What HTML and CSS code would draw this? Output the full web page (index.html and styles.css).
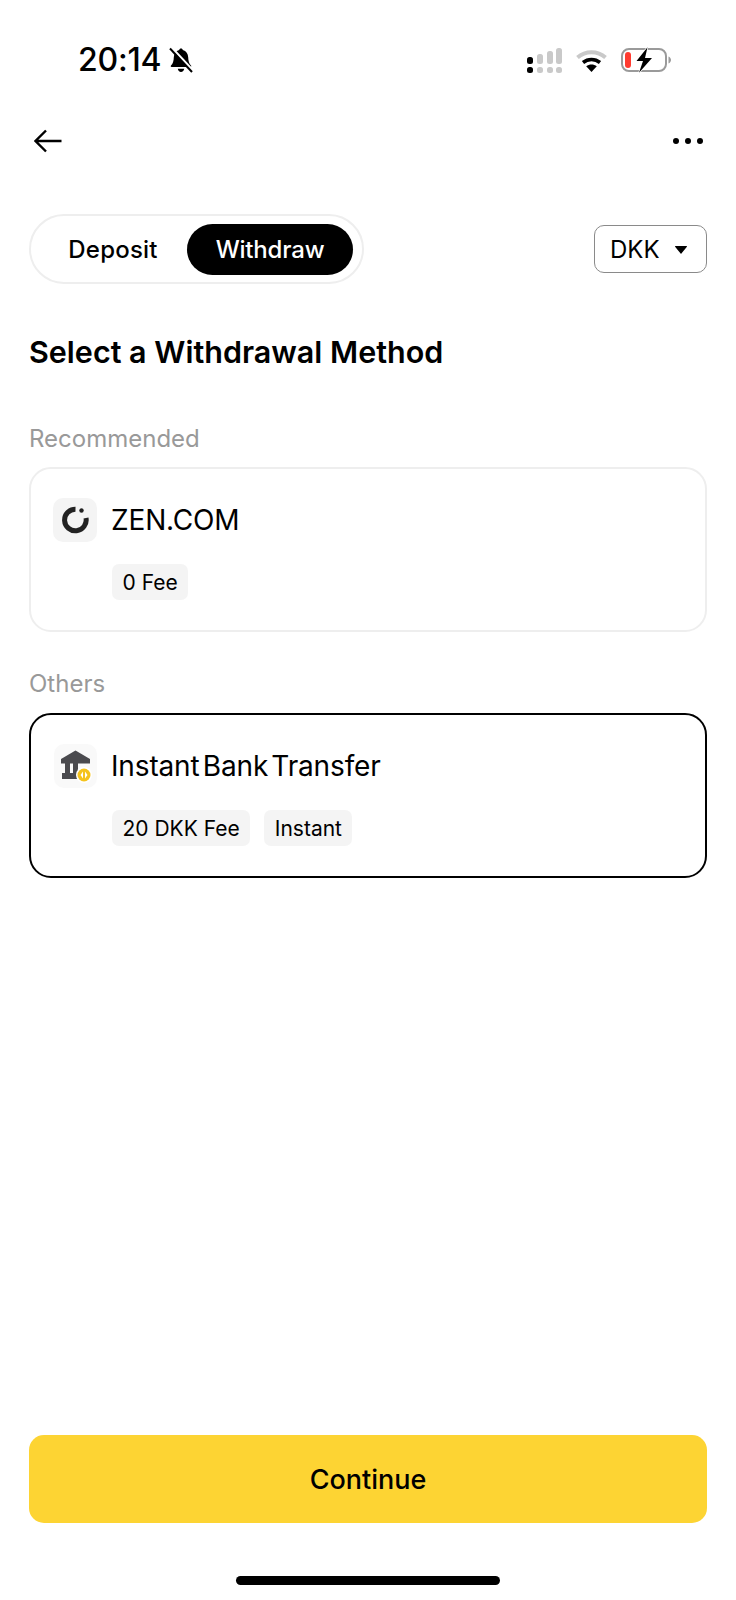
FILE: index.html
```html
<!DOCTYPE html>
<html lang="en">
<head>
<meta charset="utf-8">
<title>Select a Withdrawal Method</title>
<link rel="stylesheet" href="styles.css">
</head>
<body>
<div class="page">
  <div class="status">
    <div class="status-left">
      <span class="time">20:14</span>
      <svg class="bell" viewBox="0 0 24 26" width="24" height="26">
        <path d="M12 1.500c1 0 1.700.7 1.800 1.600 3.500.9 5.200 3.800 5.400 7.200.1 3.600.8 6.300 2.800 8.200.6.700.2 1.500-.6 1.500H2.600c-.8 0-1.200-.8-.6-1.500 2-1.900 2.700-4.600 2.800-8.200.2-3.400 1.900-6.300 5.400-7.200.1-.9.800-1.600 1.800-1.600z" fill="#000"/>
        <path d="M8.800 21.800h6.400c-.2 1.900-1.500 3.200-3.200 3.200s-3-1.300-3.200-3.200z" fill="#000"/>
        <path d="M2.500 0.500 24 23.500" stroke="#fff" stroke-width="2.500"/>
        <path d="M1 1.500 23 25" stroke="#000" stroke-width="2"/>
      </svg>
    </div>
    <div class="status-right">
      <svg class="signal" viewBox="0 0 35 25" width="35" height="25">
        <rect x="0" y="9" width="6" height="7" rx="2.500" fill="#000"/>
        <rect x="0" y="19" width="6" height="6" rx="2.500" fill="#000"/>
        <rect x="10" y="6" width="6" height="10" rx="2.500" fill="#c9c9c9"/>
        <rect x="10" y="19" width="6" height="6" rx="2.500" fill="#c9c9c9"/>
        <rect x="20" y="3" width="6" height="13" rx="2.500" fill="#c9c9c9"/>
        <rect x="20" y="19" width="6" height="6" rx="2.500" fill="#c9c9c9"/>
        <rect x="29" y="0" width="6" height="16" rx="2.500" fill="#c9c9c9"/>
        <rect x="29" y="19" width="6" height="6" rx="2.500" fill="#c9c9c9"/>
      </svg>
      <svg class="wifi" viewBox="0 0 31 23" width="31" height="23">
        <path d="M1.500 8.500C9.500 1.500 21.500 1.500 29.500 8.500" fill="none" stroke="#c9c9c9" stroke-width="4"/>
        <path d="M7 13.500C12 9.500 19 9.500 24 13.500" fill="none" stroke="#000" stroke-width="3.600"/>
        <path d="M15.500 23 10.200 17.300C13.300 15 17.700 15 20.800 17.300z" fill="#000"/>
      </svg>
      <svg class="battery" viewBox="0 0 50 26" width="50" height="26">
        <rect x="1" y="2" width="44" height="22" rx="7" fill="none" stroke="#9a9a9a" stroke-width="2"/>
        <path d="M47.500 9.500c1.500.6 2.500 2 2.500 3.500s-1 2.900-2.500 3.500z" fill="#9a9a9a"/>
        <rect x="4" y="5" width="6" height="16" rx="3" fill="#ff3b30"/>
        <path d="M26.500 0.300 15.500 14H22L18 25.700 31 11H24z" fill="#000" stroke="#fff" stroke-width="1.500" paint-order="stroke"/>
      </svg>
    </div>
  </div>

  <div class="nav">
    <svg class="back" viewBox="0 0 28 24" width="28" height="24">
      <path d="M27.500 12H2M12 1.500 1.500 12 12 22.500" fill="none" stroke="#000" stroke-width="2.400"/>
    </svg>
    <div class="dots"><i></i><i></i><i></i></div>
  </div>

  <div class="switch-row">
    <div class="tabs">
      <span class="tab">Deposit</span>
      <span class="tab tab-on">Withdraw</span>
    </div>
    <div class="currency">
      <span>DKK</span>
      <svg class="caret" viewBox="0 0 12 8" width="12" height="8"><path d="M0.500 0h11a.5.5 0 0 1 .4.800L6.400 7.600a.5.5 0 0 1-.8 0L.1.800A.5.500 0 0 1 .5 0z" fill="#000"/></svg>
    </div>
  </div>

  <h1 class="title">Select a Withdrawal Method</h1>

  <div class="label label-first">Recommended</div>
  <div class="card">
    <div class="card-head">
      <div class="logo logo-zen">
        <svg viewBox="0 0 44 44" width="44" height="44">
          <path d="M22.500 11.200A10.800 10.800 0 1 0 33 20" fill="none" stroke="#222" stroke-width="5"/>
          <circle cx="28.500" cy="12.500" r="2.200" fill="#222"/>
        </svg>
      </div>
      <span class="name">ZEN.COM</span>
    </div>
    <div class="tags"><span class="tag">0 Fee</span></div>
  </div>

  <div class="label">Others</div>
  <div class="card card-on">
    <div class="card-head">
      <div class="logo logo-bank">
        <svg viewBox="0 0 44 44" width="44" height="44">
          <path d="M21.500 6.500 36 15v4.500H7V15z" fill="#4a4a4e"/>
          <rect x="11" y="19" width="5" height="11" fill="#4a4a4e"/>
          <rect x="19" y="19" width="5" height="11" fill="#4a4a4e"/>
          <rect x="8" y="29" width="17" height="6" fill="#4a4a4e"/>
          <circle cx="30" cy="31" r="8" fill="#fff"/>
          <circle cx="30" cy="31" r="6.500" fill="#f5c31d"/>
          <path d="M29 27.500 26.500 31 29 34.500zM31 27.500 33.500 31 31 34.500z" fill="#fff"/>
        </svg>
      </div>
      <span class="name">Instant Bank Transfer</span>
    </div>
    <div class="tags"><span class="tag">20 DKK Fee</span><span class="tag">Instant</span></div>
  </div>

  <div class="spacer"></div>
  <button class="continue">Continue</button>
  <div class="home"></div>
</div>
</body>
</html>
```
FILE: styles.css
```css
* { box-sizing: border-box; }
html, body { margin: 0; padding: 0; background: #fff; }
body { font-family: "Inter", "Liberation Sans", sans-serif; color: #000; }
.page { width: 736px; height: 1600px; display: flex; flex-direction: column; padding: 47px 29px 15px 29px; overflow: hidden; }
.status { display: flex; justify-content: space-between; align-items: center; flex: none; height: 26px; padding: 0 36px 0 49px; }
.status-left { display: flex; align-items: center; gap: 8px; }
.time { font-size: 32px; font-weight: 500; line-height: 26px; letter-spacing: -0.2px; }
.bell { display: block; }
.status-right { display: flex; align-items: center; }
.signal { display: block; margin-right: 14px; }
.wifi { display: block; margin-right: 14px; }
.battery { display: block; }
.nav { display: flex; justify-content: space-between; align-items: center; flex: none; height: 24px; margin-top: 56px; padding: 0 4px 0 5px; }
.back { display: block; }
.dots { display: flex; gap: 6px; }
.dots i { display: block; width: 6px; height: 6px; border-radius: 50%; background: #000; }
.switch-row { display: flex; justify-content: space-between; align-items: center; flex: none; margin-top: 61px; }
.tabs { display: flex; align-items: center; width: 335px; height: 70px; padding: 0 8px; border: 2px solid #eee; border-radius: 35px; }
.tab { display: flex; align-items: center; justify-content: center; width: 148px; height: 51px; font-size: 24px; font-weight: 500; letter-spacing: 0.2px; border-radius: 26px; }
.tab-on { width: 166px; background: #000; color: #fff; letter-spacing: -0.2px; }
.currency { display: flex; align-items: center; gap: 15px; width: 113px; height: 48px; padding: 0 0 0 15px; border: 1.500px solid #8a8a8a; border-radius: 10px; font-size: 24px; }
.caret { display: block; margin-top: 2px; }
.title { flex: none; margin: 48px 0 0; font-size: 30.500px; line-height: 40px; font-weight: 600; }
.label { flex: none; margin-top: 37px; font-size: 24px; line-height: 30px; color: #999; }
.label-first { margin-top: 52px; }
.card { flex: none; height: 165px; margin-top: 13px; padding: 29px 22px 0; border: 2px solid #eee; border-radius: 22px; }
.card-on { margin-top: 14px; border-color: #000; }
.card-head { display: flex; align-items: center; gap: 14px; }
.logo { width: 44px; height: 44px; border-radius: 10px; background: #f4f4f4; }
.logo svg { display: block; }
.logo-bank { width: 43px; margin-left: 1px; background: #f9f9f9; }
.name { font-size: 28px; font-weight: 400; letter-spacing: -0.15px; word-spacing: -4.500px; }
.tags { display: flex; gap: 14px; margin: 22px 0 0 59px; }
.tag { display: flex; align-items: center; height: 36px; padding: 0 10.500px; border-radius: 7px; background: #f4f4f4; font-size: 21px; font-weight: 400; }
.spacer { flex: 1; }
.continue { display: block; flex: none; width: 678px; height: 88px; margin: 0; border: 0; border-radius: 15px; background: #fdd433; color: #000; font-family: inherit; font-size: 27px; font-weight: 500; }
.home { flex: none; width: 264px; height: 9px; margin: 53px 0 0 207px; border-radius: 5px; background: #000; }
```
